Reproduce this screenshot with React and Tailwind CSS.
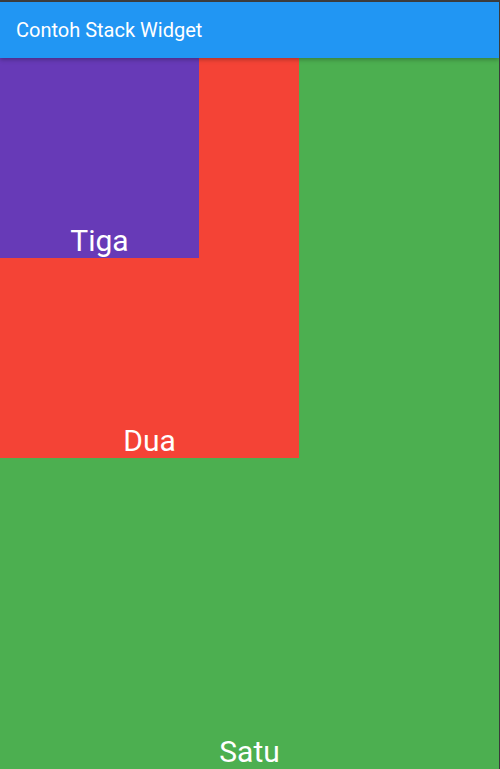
export default function App() {
  return (
    <div
      className="flex flex-col w-[500px] h-[769px] bg-[#4caf50] overflow-hidden border-r border-[#3a3a3a]"
      style={{ fontFamily: 'Roboto, "Noto Sans", sans-serif' }}
    >
      <div className="h-[2px] bg-[#3d3d3d] shrink-0" />
      <header className="relative z-10 h-[56px] shrink-0 flex items-center px-4 bg-[#2196f3] shadow-[0_2px_4px_rgba(0,0,0,0.25)]">
        <h1 className="text-[20px] font-normal text-white">Contoh Stack Widget</h1>
      </header>
      <div className="relative flex-1">
        <div className="absolute inset-0 flex items-end justify-center">
          <span className="text-[30px] leading-[35px] text-white">Satu</span>
        </div>
        <div className="absolute left-0 top-0 w-[299px] h-[400px] bg-[#f44336] flex items-end justify-center">
          <span className="text-[30px] leading-[35px] text-white">Dua</span>
        </div>
        <div className="absolute left-0 top-0 w-[199px] h-[200px] bg-[#673ab7] flex items-end justify-center">
          <span className="text-[30px] leading-[35px] text-white">Tiga</span>
        </div>
      </div>
    </div>
  );
}
